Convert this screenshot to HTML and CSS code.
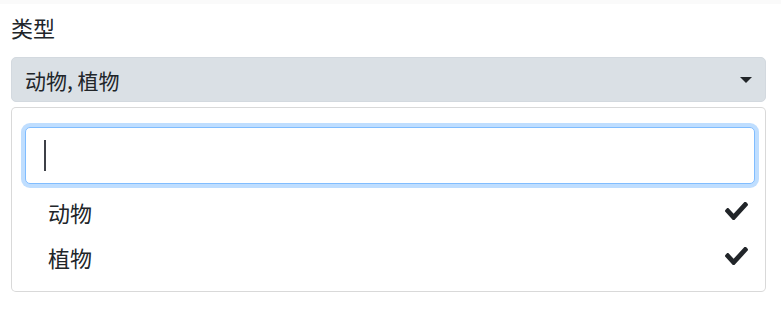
FILE: index.html
```html
<!DOCTYPE html>
<html lang="zh">
<head>
<meta charset="utf-8">
<title>类型</title>
<link rel="stylesheet" href="styles.css">
</head>
<body>
<div class="topband"></div>
<div class="page">
  <div class="form-group">
    <label class="form-label">类型</label>
    <div class="select">
      <button class="select-btn" type="button">
        <span class="select-text">动物, 植物</span>
        <span class="caret"></span>
      </button>
      <div class="menu">
        <div class="searchbox">
          <input class="search-input" type="text" aria-label="搜索">
          <span class="fake-caret"></span>
        </div>
        <ul class="options">
          <li class="option">
            <span class="option-text">动物</span>
            <svg class="check" viewBox="0 72 512 368" preserveAspectRatio="none" aria-hidden="true"><path d="M173.898 439.404l-166.4-166.4c-9.997-9.997-9.997-26.206 0-36.204l36.203-36.204c9.997-9.998 26.207-9.998 36.204 0L192 312.69 432.095 72.596c9.997-9.997 26.207-9.997 36.204 0l36.203 36.204c9.997 9.997 9.997 26.206 0 36.204l-294.4 294.401c-9.998 9.997-26.207 9.997-36.204-.001z"/></svg>
          </li>
          <li class="option">
            <span class="option-text">植物</span>
            <svg class="check" viewBox="0 72 512 368" preserveAspectRatio="none" aria-hidden="true"><path d="M173.898 439.404l-166.4-166.4c-9.997-9.997-9.997-26.206 0-36.204l36.203-36.204c9.997-9.998 26.207-9.998 36.204 0L192 312.69 432.095 72.596c9.997-9.997 26.207-9.997 36.204 0l36.203 36.204c9.997 9.997 9.997 26.206 0 36.204l-294.4 294.401c-9.998 9.997-26.207 9.997-36.204-.001z"/></svg>
          </li>
        </ul>
      </div>
    </div>
  </div>
  <div class="form-group second">
    <label class="form-label">名称</label>
    <input class="form-input" type="text" aria-label="名称">
  </div>
</div>
</body>
</html>
```
FILE: styles.css
```css
* { box-sizing: border-box; }
html, body { margin: 0; padding: 0; background: #fff; }
body {
  min-height: 314px;
  font-family: "Noto Sans CJK SC", "Noto Sans", "Liberation Sans", sans-serif;
  color: #212529;
}
.topband { height: 4px; background: #fafafa; }
.page { padding: 8px 15px 0 11px; }
.form-group { display: flex; flex-direction: column; }
.form-label { font-size: 22px; line-height: 30px; margin: 0 0 15px 0; }
.select { position: relative; }
.select-btn {
  display: flex; align-items: center; justify-content: space-between;
  width: 100%; height: 45px; margin: 0;
  padding: 0 13px 0 13px;
  background: #dae0e5; border: 1px solid #d3d9df; border-radius: 5px;
  font-family: inherit; font-size: 21px; color: #212529; text-align: left;
}
.select-text { line-height: 30px; }
.caret {
  width: 0; height: 0;
  border-top: 6px solid #212529;
  border-left: 6px solid transparent;
  border-right: 6px solid transparent;
}
.menu {
  position: absolute; z-index: 10; top: 50px; left: 0; right: 0;
  height: 185px;
  background: #fff;
  border: 1px solid rgba(0,0,0,.15);
  border-radius: 5px;
  padding: 19px 10px 0 13px;
}
.searchbox { position: relative; }
.search-input {
  display: block; width: 100%; height: 57px; margin: 0;
  border: 1px solid #80bdff; border-radius: 5px;
  box-shadow: 0 0 0 4px rgba(0,123,255,.25);
  outline: none; caret-color: transparent;
  font-family: inherit; font-size: 22px; padding: 0 18px;
}
.fake-caret {
  position: absolute; left: 19px; top: 13px;
  width: 2px; height: 31px; background: #3d4047;
}
.options { list-style: none; margin: 6px 0 0 0; padding: 0; }
.option {
  display: flex; align-items: center; justify-content: space-between;
  height: 45px; padding: 0 7px 0 23px;
  font-size: 22px;
}
.option-text { line-height: 33px; }
.check { width: 23px; height: 18px; fill: #212529; margin-top: -3px; }
.second { margin-top: 32px; }
.second .form-label { margin-bottom: 9px; }
.form-input {
  height: 42px; border: 1px solid #ced4da; border-radius: 5px; width: 100%;
}
```
